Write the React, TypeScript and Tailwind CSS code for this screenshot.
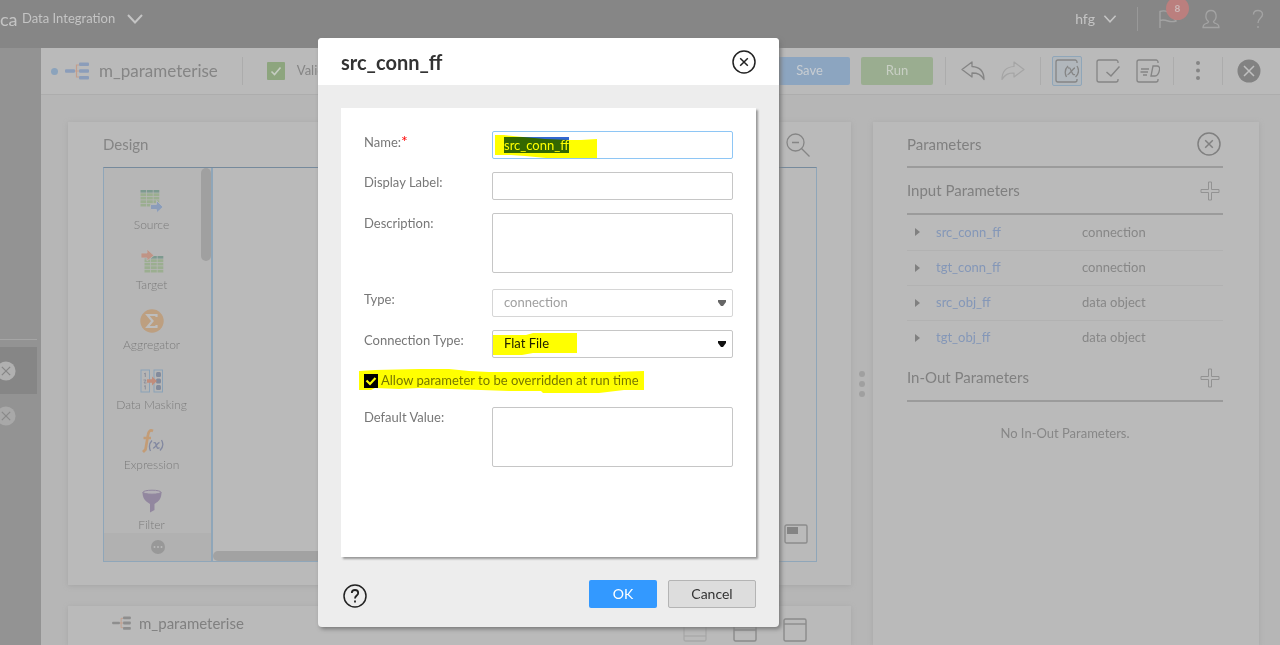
import { useEffect, useRef, useState } from "react";
import type { ReactNode } from "react";

const inputParameters = [
  { name: "src_conn_ff", type: "connection" },
  { name: "tgt_conn_ff", type: "connection" },
  { name: "src_obj_ff", type: "data object" },
  { name: "tgt_obj_ff", type: "data object" },
];

function Divider() {
  return <span className="h-7 w-px bg-[#acacac]" />;
}

function Chevron({ className }: { className: string }) {
  return (
    <svg viewBox="0 0 16 10" className={className} fill="none" stroke="currentColor" strokeWidth="2">
      <path d="M1 1l7 7.500L15 1" />
    </svg>
  );
}

function CircleX({ className, filled }: { className: string; filled?: string }) {
  return (
    <svg viewBox="0 0 24 24" className={className} fill="none" stroke="currentColor" strokeWidth="1.500">
      {filled ? <circle cx="12" cy="12" r="11.500" fill={filled} stroke="none" /> : <circle cx="12" cy="12" r="11" />}
      {filled ? <path d="M7 7l10 10M17 7L7 17" /> : <path d="M8.200 8.200l7.600 7.600M15.800 8.200l-7.600 7.600" />}
    </svg>
  );
}

function MappingIcon({ className, color }: { className: string; color: string }) {
  return (
    <svg viewBox="0 0 24 18" className={className} fill="none">
      <path d="M14 3h-2.500v12H14M10 9h4" stroke="#c39e8c" strokeWidth="1.200" />
      <g fill={color}>
        <rect x="0" y="7.300" width="10" height="3.400" rx="1" />
        <rect x="14" y="0.500" width="10" height="3.600" rx="1" />
        <rect x="14" y="7.200" width="10" height="3.600" rx="1" />
        <rect x="14" y="14" width="10" height="3.600" rx="1" />
      </g>
    </svg>
  );
}

function Grid({ x, y }: { x: number; y: number }) {
  return (
    <g transform={`translate(${x} ${y})`}>
      {[0, 6.5, 13].map((cx) => (
        <g key={cx}>
          <rect x={cx} y="0" width="5.800" height="2.600" fill="#7d9a8f" />
          {[3.3, 6.8, 10.3, 13.8].map((cy) => (
            <rect key={cy} x={cx} y={cy} width="5.800" height="2.700" fill="#9bae90" />
          ))}
        </g>
      ))}
    </g>
  );
}

const transformations: { label: string; icon: ReactNode }[] = [
  {
    label: "Source",
    icon: (
      <>
        <Grid x={0.5} y={1} />
        <path d="M10.500 15.500h6v-4l6.500 6.500-6.500 6v-3.500h-6z" fill="#8b9dba" stroke="#b9b9b9" strokeWidth="0.800" />
      </>
    ),
  },
  {
    label: "Target",
    icon: (
      <>
        <Grid x={4.5} y={7} />
        <path d="M1 4h6V0l7 6.500L7 12V9H1z" fill="#c09486" stroke="#b9b9b9" strokeWidth="0.800" />
      </>
    ),
  },
  {
    label: "Aggregator",
    icon: (
      <>
        <circle cx="12" cy="12" r="11.700" fill="#bd9f80" />
        <path d="M16.500 8V6h-9l5 6-5 6h9v-2" fill="none" stroke="#bdbdbd" strokeWidth="2.200" />
      </>
    ),
  },
  {
    label: "Data Masking",
    icon: (
      <>
        <g fill="none" stroke="#8aa2b7">
          <rect x="1" y="1" width="8.500" height="22" />
          <rect x="14" y="1" width="8.500" height="22" />
        </g>
        <path d="M4 5l1.300-1v4M3.500 11h2.500l-2 3h2.500M4 17.500l1.300-1v4" fill="none" stroke="#8d8f9a" />
        <g fill="#838b9c">
          <rect x="16" y="3" width="5" height="5" rx="1.500" />
          <rect x="16" y="9.500" width="5" height="5" rx="1.500" />
          <rect x="16" y="16" width="5" height="5" rx="1.500" />
        </g>
        <path d="M7 10.200h5V7.500l5 4.500-5 4.500v-2.700H7z" fill="#c08d7c" />
      </>
    ),
  },
  {
    label: "Expression",
    icon: (
      <>
        <path d="M13 2c-3-1.500-4.500.5-5 4L5.500 20.500 3 23M3.500 9H11" fill="none" stroke="#c39c76" strokeWidth="2.700" />
        <g fill="none" stroke="#8288a0" strokeWidth="1.300">
          <path d="M12 11.500c-3 3-3 7-1.500 10.500M21.500 11c2 3.500 1.500 7.500-1.500 10.500" />
          <path d="M13.500 14c2-1 2 0 3 3s1.500 3 3 1.500M19.500 13.500c-2 0-4.500 6-6.500 5.500" />
        </g>
      </>
    ),
  },
  {
    label: "Filter",
    icon: (
      <>
        <path d="M2.500 3h19c0 6-2 9-7 12v6l-4.500 2.500V15c-5-3-7.500-6-7.500-12z" fill="#92879f" />
        <ellipse cx="12" cy="3.200" rx="9" ry="2" fill="#b3b0b6" stroke="#92879f" />
      </>
    ),
  },
];

function AppHeader() {
  return (
    <header className="flex h-12 shrink-0 items-start justify-between overflow-hidden bg-[#868686] text-[#c4c4c4]">
      <div className="flex h-[38px] items-center">
        <span className="w-[22px] text-lg">ca</span>
        <button className="flex items-center gap-3 text-[13px]">
          Data Integration
          <Chevron className="h-2.5 w-4" />
        </button>
      </div>
      <div className="flex h-[38px] items-center pr-4">
        <button className="flex items-center gap-2 text-sm">
          hfg
          <Chevron className="h-2 w-3.5" />
        </button>
        <span className="ml-5 h-6 w-px bg-[#999]" />
        <button aria-label="Notifications" className="relative ml-5 text-[#a3a3a3]">
          <svg viewBox="0 0 20 20" className="size-5" fill="none" stroke="currentColor" strokeWidth="1.400">
            <path d="M2 19V2.500c3-1 5-1 8 .5s5 1 8 .5l-3 4.500 3 4c-3 1-5 1-8 0s-5-1.500-8-.5" />
          </svg>
          <span className="absolute -top-3 left-2 flex size-[23px] items-center justify-center rounded-full bg-[#bb7f7e] text-[10px] font-bold text-[#cdb9b9]">
            8
          </span>
        </button>
        <button aria-label="Account" className="ml-6 text-[#a3a3a3]">
          <svg viewBox="0 0 18 20" className="h-5 w-[18px]" fill="none" stroke="currentColor" strokeWidth="1.300">
            <path d="M6.500 12.500C2.500 9.500 3 1.500 9 1.500s6.500 8 2.500 11c0 1.500 1 1.500 2.500 2 2 .6 3 1.500 3 4H1c0-2.500 1-3.400 3-4 1.500-.5 2.500-.5 2.500-2z" />
          </svg>
        </button>
        <button aria-label="Help" className="ml-8 text-[#a3a3a3]">
          <svg viewBox="0 0 12 20" className="h-5 w-3" fill="none" stroke="currentColor" strokeWidth="1.400">
            <path d="M1.500 5.500C1.500 3 3.500 1.500 6 1.500s4.500 1.500 4.500 4C10.500 9 6 9 6 14M6 17v2" />
          </svg>
        </button>
      </div>
    </header>
  );
}

function SideRail() {
  return (
    <aside className="w-[41px] shrink-0 overflow-hidden bg-[#939393] pr-1 pt-[291px]">
      <div className="h-2 border-t border-[#a5a5a5]" />
      <div className="flex h-[47px] items-center bg-[#868686]">
        <button aria-label="Close tab" className="-ml-1 text-[#868686]">
          <CircleX className="size-5" filled="#b0b0b0" />
        </button>
      </div>
      <div className="flex h-[44px] items-center">
        <button aria-label="Close tab" className="-ml-1 text-[#8a8a8a]">
          <CircleX className="size-5" filled="#a8a8a8" />
        </button>
      </div>
    </aside>
  );
}

function Toolbar() {
  return (
    <div className="flex h-[47px] shrink-0 items-center justify-between border-b border-[#adadad] bg-[#bababa] pl-2.5 pr-[19px] text-[#858585]">
      <div className="flex items-center">
        <span className="size-[7px] rounded-full bg-[#8ba3bc]" />
        <MappingIcon className="ml-[7px] h-[18px] w-6" color="#8b9dba" />
        <h1 className="ml-2.5 text-[17px]">m_parameterise</h1>
        <span className="ml-6 h-7 w-px bg-[#acacac]" />
        <svg viewBox="0 0 18 18" className="ml-6 size-[18px]">
          <rect width="18" height="18" rx="1" fill="#8da57e" />
          <path d="M4.500 9.500l3 3 6-7" fill="none" stroke="#c6cdc2" strokeWidth="1.600" />
        </svg>
        <span className="ml-3 text-[13px]">Valid</span>
      </div>
      <div className="flex items-center">
        <button className="h-7 w-[81px] rounded-xs bg-[#8ca5c0] text-[13px] text-[#c8cdd2]">Save</button>
        <button className="ml-[11px] mr-3 h-7 w-[72px] rounded-xs bg-[#9aad90] text-[13px] text-[#c8cfc4]">Run</button>
        <Divider />
        <button aria-label="Undo" className="ml-[15px]">
          <svg viewBox="0 0 24 20" className="h-5 w-6" fill="none" stroke="currentColor" strokeWidth="1.300" strokeLinejoin="round">
            <path d="M1 8.500L11 1v4.500c8 .5 12 5 12 13C20 13.500 17 12 11 12v4z" />
          </svg>
        </button>
        <button aria-label="Redo" className="ml-4 mr-[15px] text-[#a5a5a5]">
          <svg viewBox="0 0 24 20" className="h-5 w-6" fill="none" stroke="currentColor" strokeWidth="1.200" strokeLinejoin="round">
            <path d="M23 8.500L13 1v4.500C5 6 1 10.500 1 18.500 4 13.500 7 12 13 12v4z" />
          </svg>
        </button>
        <Divider />
        <button
          aria-label="Parameters"
          className="ml-[11px] flex size-[30px] items-center justify-center rounded-xs border border-[#8fa6b9] bg-[#b1b7bc]"
        >
          <svg viewBox="0 0 24 24" className="size-6" fill="none" stroke="currentColor" strokeWidth="1.300">
            <path d="M22 4V3a2 2 0 0 0-2-2H3a2 2 0 0 0-2 2v18a2 2 0 0 0 2 2h17a2 2 0 0 0 2-2v-1" />
            <path d="M13 7c-3.500 3.500-3.500 7-1.500 11M22 7c2.500 4 1.500 8-1.500 11M13 9c2-.5 2 0 3.500 3.500s2 3.500 3.500 3M20 9c-2 0-5.500 7-7.500 6.500" />
          </svg>
        </button>
        <button aria-label="Validation" className="ml-3.5">
          <svg viewBox="0 0 24 24" className="size-6" fill="none" stroke="currentColor" strokeWidth="1.300">
            <path d="M22 4V3a2 2 0 0 0-2-2H3a2 2 0 0 0-2 2v18a2 2 0 0 0 2 2h17a2 2 0 0 0 2-2v-1" />
            <path d="M10.500 13l4.500 4L23.500 7.500" strokeWidth="1.500" />
          </svg>
        </button>
        <button aria-label="Data preview" className="ml-4 mr-[13px]">
          <svg viewBox="0 0 24 24" className="size-6" fill="none" stroke="currentColor" strokeWidth="1.300">
            <path d="M22 4V3a2 2 0 0 0-2-2H3a2 2 0 0 0-2 2v18a2 2 0 0 0 2 2h17a2 2 0 0 0 2-2v-1" />
            <path d="M5 10h8M4.500 13h7.500M7 16h4M15 17l2-10h4c2 0 3 1.500 2.500 4-.8 4.500-2 6-4.500 6z" />
          </svg>
        </button>
        <Divider />
        <button aria-label="More actions" className="mx-[22px]">
          <svg viewBox="0 0 4 20" className="h-5 w-1" fill="currentColor">
            <circle cx="2" cy="2" r="2" />
            <circle cx="2" cy="9.500" r="2" />
            <circle cx="2" cy="17" r="2" />
          </svg>
        </button>
        <Divider />
        <button aria-label="Close" className="ml-3.5 text-[#c0c0c0]">
          <CircleX className="size-6" filled="#828282" />
        </button>
      </div>
    </div>
  );
}

function DesignPanel() {
  return (
    <section className="h-[463px] shrink-0 bg-[#bababa] pl-[35px] pr-[34px] shadow-[0_1px_5px_#a6a6a6]">
      <div className="flex h-[45px] items-center justify-between pr-[7px] text-[#858585]">
        <h2 className="text-[15px]">Design</h2>
        <button aria-label="Zoom out">
          <svg viewBox="0 0 24 24" className="size-6" fill="none" stroke="currentColor" strokeWidth="1.300">
            <circle cx="9.500" cy="9.500" r="8.500" />
            <path d="M6 9.500h7M15.500 15.500l8 8" />
          </svg>
        </button>
      </div>
      <div className="flex h-[395px] border border-x-[#8fa6b9] border-t-[#768a9c] border-b-[#8fa6b9]">
        <div className="relative flex w-[109px] flex-col border-r-2 border-r-[#8fa6b9] bg-[#b6b6b6]">
          <ul className="flex flex-1 flex-col gap-4 overflow-hidden pr-3 pt-[21px]">
            {transformations.map((item) => (
              <li key={item.label} className="flex h-11 shrink-0 flex-col items-center gap-1">
                <svg viewBox="0 0 24 24" className="size-6 shrink-0">
                  {item.icon}
                </svg>
                <span className="whitespace-nowrap text-xs font-light leading-4 text-[#7c7c7c]">{item.label}</span>
              </li>
            ))}
          </ul>
          <button aria-label="More transformations" className="flex h-7 items-center justify-center bg-[#b1b1b1]">
            <svg viewBox="0 0 14 14" className="size-3.5">
              <circle cx="7" cy="7" r="7" fill="#989898" />
              <g fill="#bababa">
                <circle cx="3.500" cy="7" r="1" />
                <circle cx="7" cy="7" r="1" />
                <circle cx="10.500" cy="7" r="1" />
              </g>
            </svg>
          </button>
          <span className="absolute right-0 top-0 h-[93px] w-2.5 rounded-full bg-[#a0a0a0]" />
        </div>
        <div className="relative flex-1">
          <span className="absolute bottom-0 left-0 h-2.5 w-80 rounded-full bg-[#a2a2a2]" />
          <button aria-label="Overview" className="absolute bottom-[17px] right-2">
            <svg viewBox="0 0 24 20" className="h-5 w-6" fill="none">
              <rect x="1" y="1" width="22" height="18" rx="1.500" stroke="#8c8c8c" strokeWidth="1.400" />
              <rect x="3" y="3" width="11" height="7" fill="#848484" />
            </svg>
          </button>
        </div>
      </div>
    </section>
  );
}

function DetailsPanel() {
  return (
    <section className="flex flex-1 items-start justify-between overflow-hidden bg-[#bababa] pl-11 pr-11 pt-1.5 shadow-[0_1px_5px_#a6a6a6]">
      <div className="flex items-center gap-2 text-[#808080]">
        <MappingIcon className="h-3.5 w-[19px]" color="#8e8e8e" />
        <h2 className="text-[15px]">m_parameterise</h2>
      </div>
      <div className="flex gap-[26px] pt-1.5 text-[#8b8b8b]">
        <svg viewBox="0 0 24 24" className="size-6 text-[#a8a8a8]" fill="none" stroke="currentColor" strokeWidth="1.300">
          <rect x="1" y="1" width="22" height="22" rx="1.500" />
          <path d="M1 18h22" />
        </svg>
        <svg viewBox="0 0 24 24" className="size-6" fill="none" stroke="currentColor" strokeWidth="1.400">
          <rect x="1" y="1" width="22" height="22" rx="1.500" />
          <path d="M1 12h22" />
        </svg>
        <svg viewBox="0 0 24 24" className="size-6" fill="none" stroke="currentColor" strokeWidth="1.400">
          <rect x="1" y="1" width="22" height="22" rx="1.500" />
          <path d="M1 6h22" />
        </svg>
      </div>
    </section>
  );
}

function SectionHeading({ title }: { title: string }) {
  return (
    <div className="flex h-[47px] items-center justify-between border-b-2 border-[#9b9b9b] pr-[3px]">
      <h3 className="text-[15px]">{title}</h3>
      <button aria-label={`Add to ${title}`}>
        <svg viewBox="0 0 20 20" className="size-5" fill="none" stroke="#929292" strokeLinejoin="round">
          <path d="M8.500 1h3v7.500H19v3h-7.500V19h-3v-7.500H1v-3h7.500z" />
        </svg>
      </button>
    </div>
  );
}

function ParametersPanel() {
  return (
    <aside className="w-[386px] shrink-0 bg-[#bababa] pl-[34px] pr-9 text-[#808080] shadow-[0_1px_5px_#a6a6a6]">
      <div className="flex h-[46px] items-center justify-between border-b-2 border-[#9b9b9b] pr-0.5">
        <h2 className="text-[15px]">Parameters</h2>
        <button aria-label="Close parameters">
          <CircleX className="size-6" />
        </button>
      </div>
      <SectionHeading title="Input Parameters" />
      <table className="w-full table-fixed text-[13px]">
        <tbody>
          {inputParameters.map((param) => (
            <tr key={param.name} className="h-[35px] border-b border-[#b2b2b2] last:border-0">
              <td className="w-[29px] pl-2">
                <button aria-label="Expand" className="block">
                  <svg viewBox="0 0 5 8" className="h-2 w-[5px]" fill="currentColor">
                    <path d="M0 0l5 4-5 4z" />
                  </svg>
                </button>
              </td>
              <td className="w-[146px]">
                <a href="#" className="text-[#8497b8]">
                  {param.name}
                </a>
              </td>
              <td className="text-[#878787]">{param.type}</td>
            </tr>
          ))}
        </tbody>
      </table>
      <SectionHeading title="In-Out Parameters" />
      <p className="pt-[22px] text-center text-[13px] text-[#878787]">No In-Out Parameters.</p>
    </aside>
  );
}

// Marker strokes, multiplied over the form controls
function Marker({ className, viewBox, d }: { className: string; viewBox: string; d: string }) {
  return (
    <svg viewBox={viewBox} className={`pointer-events-none absolute mix-blend-multiply ${className}`} fill="#ffff00">
      <path d={d} />
    </svg>
  );
}

function FormRow({ id, label, required, children }: { id: string; label: string; required?: boolean; children: ReactNode }) {
  return (
    <div className="flex items-start">
      <label htmlFor={id} className="w-32 shrink-0 leading-5">
        {label}
        {required && <span className="text-base leading-5 text-[#ff0000]">*</span>}
      </label>
      <div className="relative flex-1">{children}</div>
    </div>
  );
}

function Caret({ className }: { className: string }) {
  return (
    <svg viewBox="0 0 8 6" className={`pointer-events-none absolute right-[7px] top-[11px] h-1.5 w-2 ${className}`} fill="currentColor">
      <path d="M0 0h8v2L5 6H3L0 2z" />
    </svg>
  );
}

function ParameterDialog() {
  const nameRef = useRef<HTMLInputElement>(null);
  const [allowOverride, setAllowOverride] = useState(true);

  useEffect(() => {
    nameRef.current?.focus();
    nameRef.current?.select();
  }, []);

  const field = "block w-full rounded-xs border bg-white px-[11px] text-[13px] outline-none";

  return (
    <div
      role="dialog"
      aria-labelledby="dialog-title"
      className="absolute left-[318px] top-[38px] w-[461px] rounded-[4px] bg-[#ededed] shadow-[2px_2px_4px_#777]"
    >
      <div className="flex h-[47px] items-center justify-between rounded-t-[4px] bg-white px-[23px]">
        <h2 id="dialog-title" className="text-xl font-bold text-[#333]">
          src_conn_ff
        </h2>
        <button aria-label="Close dialog" className="text-[#222]">
          <CircleX className="size-6" />
        </button>
      </div>
      <form className="mx-[23px] mt-[23px] flex h-[449px] flex-col gap-[13px] bg-white p-[23px] text-[13px] text-[#777] shadow-[2px_2px_2px_#999]">
        <FormRow id="name" label="Name:" required>
          <input
            id="name"
            ref={nameRef}
            defaultValue="src_conn_ff"
            className={`${field} h-7 border-[#8ec6f5] leading-5 text-[#333] selection:bg-[#3367d1] selection:text-white`}
          />
          <Marker
            className="left-[3px] top-[3px] h-6 w-[103px]"
            viewBox="0 0 103 24"
            d="M0 1L9 1 28 3 50 5 74 6H86L102 5V24H51L30 22 16 21H0z"
          />
        </FormRow>
        <FormRow id="display-label" label="Display Label:">
          <input id="display-label" className={`${field} h-7 border-[#c6c6c6]`} />
        </FormRow>
        <FormRow id="description" label="Description:">
          <textarea id="description" className={`${field} mb-[3px] h-[60px] resize-none border-[#c6c6c6]`} />
        </FormRow>
        <FormRow id="type" label="Type:">
          <select id="type" disabled className={`${field} h-7 appearance-none border-[#d6d6d6] text-[#a0a0a0] disabled:opacity-100`}>
            <option>connection</option>
          </select>
          <Caret className="text-[#666]" />
        </FormRow>
        <FormRow id="connection-type" label="Connection Type:">
          <select id="connection-type" className={`${field} h-7 appearance-none border-[#c6c6c6] text-[#222]`}>
            <option>Flat File</option>
          </select>
          <Caret className="text-[#111]" />
          <Marker
            className="left-px top-[3px] h-[22px] w-[85px]"
            viewBox="0 0 85 22"
            d="M0 2H33L40 0H84V20H40L29 22H0z"
          />
        </FormRow>
        <div className="relative mb-[3px] flex h-5 items-center">
          <input
            id="allow-override"
            type="checkbox"
            checked={allowOverride}
            onChange={(e) => setAllowOverride(e.target.checked)}
            className="peer size-3.5 appearance-none bg-black"
          />
          <svg
            viewBox="0 0 14 14"
            className="pointer-events-none absolute left-0 hidden size-3.5 peer-checked:block"
            fill="none"
            stroke="#fff"
            strokeWidth="2.200"
          >
            <path d="M2.500 6.500l3.500 3.500 5.500-6" />
          </svg>
          <label htmlFor="allow-override" className="ml-[3px] whitespace-nowrap">
            Allow parameter to be overridden at run time
          </label>
          <Marker
            className="-left-[5px] -top-[2px] h-6 w-[286px]"
            viewBox="0 0 286 24"
            d="M0 2L16 1 60 0H90L110 2 130 3H255L285 2V21L265 21 240 24H184L182 22 150 22 122 21 90 20 60 19 40 20 16 19 12 21H0z"
          />
        </div>
        <FormRow id="default-value" label="Default Value:">
          <textarea id="default-value" className={`${field} h-[60px] resize-none border-[#c6c6c6]`} />
        </FormRow>
      </form>
      <div className="flex items-start px-[23px] pb-[19px] pt-[23px]">
        <button aria-label="Help" className="ml-0.5 mt-1 text-[#222]">
          <svg viewBox="0 0 24 24" className="size-6" fill="none" stroke="currentColor" strokeWidth="1.500">
            <circle cx="12" cy="12" r="11" />
            <path d="M8.800 9c0-2 1.400-3 3.200-3s3.200 1.200 3.200 2.900C15.200 11.500 12 11.500 12 14.500M12 16.500v2" strokeWidth="1.800" />
          </svg>
        </button>
        <button className="ml-auto h-7 w-[68px] rounded-xs bg-[#3399ff] text-sm text-white">OK</button>
        <button className="ml-[11px] h-7 w-[88px] rounded-xs border border-[#b4b4b4] bg-[#dddddd] text-sm text-[#333]">
          Cancel
        </button>
      </div>
    </div>
  );
}

export default function App() {
  return (
    <div className="relative flex h-screen flex-col overflow-hidden bg-[#b6b6b6] font-['Lato',sans-serif]">
      <AppHeader />
      <div className="flex min-h-0 flex-1">
        <SideRail />
        <main className="flex min-w-0 flex-1 flex-col">
          <Toolbar />
          <div className="flex min-h-0 flex-1 pl-[27px] pr-[21px] pt-[27px]">
            <div className="flex min-w-0 flex-1 flex-col gap-[21px]">
              <DesignPanel />
              <DetailsPanel />
            </div>
            <div className="flex w-[22px] shrink-0 flex-col items-center gap-1 pt-[249px]">
              <span className="size-1.5 rounded-full bg-[#a0a0a0]" />
              <span className="size-1.5 rounded-full bg-[#a0a0a0]" />
              <span className="size-1.5 rounded-full bg-[#a0a0a0]" />
            </div>
            <ParametersPanel />
          </div>
        </main>
      </div>
      <ParameterDialog />
    </div>
  );
}
